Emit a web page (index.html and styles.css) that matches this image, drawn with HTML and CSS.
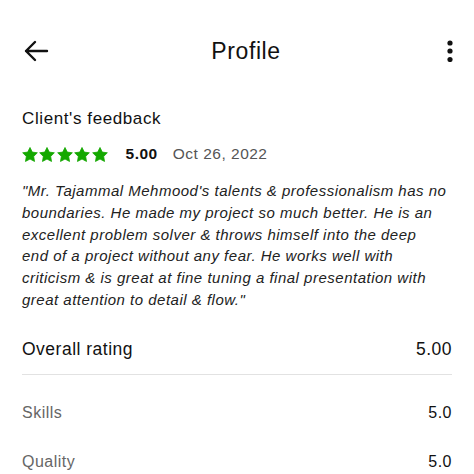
FILE: index.html
```html
<!DOCTYPE html>
<html lang="en">
<head>
  <meta charset="UTF-8" />
  <meta name="viewport" content="width=device-width, initial-scale=1.0"/>
  <title>Profile</title>
  <link rel="stylesheet" href="styles.css">
</head>
<body>
  <header class="topbar">
    <button class="icon-btn back" aria-label="Back">
      <svg width="26" height="22" viewBox="0 0 26 22" fill="none" stroke="#111" stroke-width="2.4" stroke-linecap="round" stroke-linejoin="round">
        <path d="M24 11H3M12 2L3 11l9 9"/>
      </svg>
    </button>
    <h1>Profile</h1>
    <button class="icon-btn more" aria-label="More">
      <svg width="6" height="22" viewBox="0 0 6 22" fill="#111">
        <circle cx="3" cy="3" r="2.6"/>
        <circle cx="3" cy="11" r="2.6"/>
        <circle cx="3" cy="19.5" r="2.6"/>
      </svg>
    </button>
  </header>

  <section class="feedback">
    <h2>Client's feedback</h2>
    <div class="rating-line">
      <div class="stars" id="stars"></div>
      <span class="score">5.00</span>
      <span class="date">Oct 26, 2022</span>
    </div>
    <p class="quote">"Mr. Tajammal Mehmood's talents &amp; professionalism has no<br>
      boundaries. He made my project so much better. He is an<br>
      excellent problem solver &amp; throws himself into the deep<br>
      end of a project without any fear. He works well with<br>
      criticism &amp; is great at fine tuning a final presentation with<br>
      great attention to detail &amp; flow."</p>
  </section>

  <section class="ratings">
    <div class="row overall">
      <span>Overall rating</span>
      <span>5.00</span>
    </div>
    <div class="row sub">
      <span class="label">Skills</span>
      <span>5.0</span>
    </div>
    <div class="row sub">
      <span class="label">Quality</span>
      <span>5.0</span>
    </div>
  </section>

  <script>
    const star = '<svg width="16" height="15" viewBox="2 2 20 19.2"><path fill="#14a800" stroke="#14a800" stroke-width="1" stroke-linejoin="round" d="M12 2.6l2.9 5.9 6.5.9-4.7 4.6 1.1 6.5L12 17.4l-5.8 3.1 1.1-6.5-4.7-4.6 6.5-.9z"/></svg>';
    document.getElementById('stars').innerHTML = star.repeat(5);
  </script>
</body>
</html>
```

FILE: styles.css
```css
body { font-family: "Liberation Sans", Arial, sans-serif; background: #fff; color: #1a1a1a; margin: 0; letter-spacing: 0.5px; }
.topbar { display: flex; align-items: center; padding: 34px 20px 0 23px; height: 34px; }
.icon-btn { background: none; border: 0; padding: 0; display: flex; }
.topbar h1 { flex: 1; margin: 0; padding-right: 4px; text-align: center; font-size: 23px; font-weight: normal; color: #111; letter-spacing: 0.6px; }
.more { margin-right: 1px; }
.feedback { padding: 0 22px; }
.feedback h2 { margin: 41px 0 0; font-size: 17px; font-weight: normal; color: #111; letter-spacing: 0.6px; }
.rating-line { display: flex; align-items: center; margin-top: 16px; }
.stars { display: flex; gap: 1.4px; }
.score { margin-left: 18px; font-size: 15.5px; font-weight: bold; color: #111; }
.date { margin-left: 15px; font-size: 15.5px; color: #555; }
.quote { margin: 17px -10px 0 0; font-size: 15px; font-style: italic; line-height: 21.8px; color: #222; letter-spacing: 0.5px; }
.ratings { padding: 0 22px; margin-top: 28px; }
.row { display: flex; justify-content: space-between; align-items: baseline; }
.overall { font-size: 17.5px; color: #111; padding-bottom: 14px; border-bottom: 1.5px solid #e2e2e2; }
.sub { font-size: 16px; color: #111; margin-top: 29px; }
.sub + .sub { margin-top: 31px; }
.sub .label { color: #666; }
```
